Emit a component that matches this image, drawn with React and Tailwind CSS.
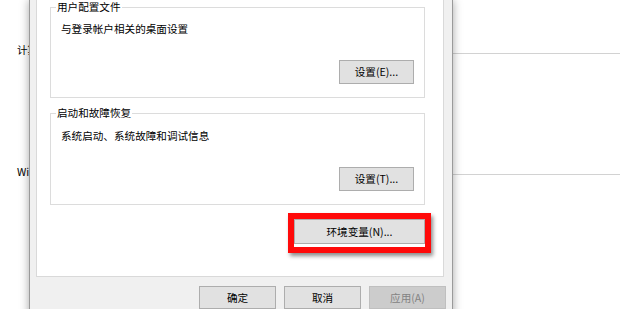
export default function App() {
  const font = { fontFamily: '"Noto Sans CJK SC", "Noto Sans", sans-serif' };
  return (
    <div
      className="w-[620px] h-[309px] flex overflow-hidden bg-white text-[10.6px] text-black"
      style={font}
    >
      {/* left background window */}
      <div className="w-[29px] shrink-0 overflow-hidden whitespace-nowrap pl-[17px] leading-[16px]">
        <div className="mt-[42px]">计算机名</div>
        <div className="mt-[106px]">Windows</div>
      </div>

      {/* dialog */}
      <div className="relative z-10 w-[424px] shrink-0 h-[340px] bg-[#f0f0f0] border-x border-[#9a9a9a] shadow-[0_0_9px_rgba(0,0,0,0.35)] px-[6px] flex flex-col">
        <div className="w-[408px] bg-white border-x border-b border-[#d9d9d9] pl-[13px] pt-[7px] pb-[23px] flex flex-col">
          {/* group 1 */}
          <div className="relative w-[375px] border border-[#dcdcdc] pt-[13px] pb-[13px] pl-[10px] pr-[10px] flex flex-col">
            <span className="absolute left-[5px] top-[-9px] px-[1px] bg-white leading-[16px]">用户配置文件</span>
            <div className="leading-[16px]">与登录帐户相关的桌面设置</div>
            <div className="mt-[23px] self-end w-[75px] h-[24px] bg-[#e1e1e1] border border-[#adadad] flex items-center justify-center">
              设置(E)...
            </div>
          </div>

          {/* group 2 */}
          <div className="relative mt-[15px] w-[375px] border border-[#dcdcdc] pt-[14px] pb-[13px] pl-[10px] pr-[10px] flex flex-col">
            <span className="absolute left-[5px] top-[-9px] px-[1px] bg-white leading-[16px]">启动和故障恢复</span>
            <div className="leading-[16px]">系统启动、系统故障和调试信息</div>
            <div className="mt-[23px] self-end w-[75px] h-[24px] bg-[#e1e1e1] border border-[#adadad] flex items-center justify-center">
              设置(T)...
            </div>
          </div>

          {/* env var button highlighted */}
          <div className="mt-[8px] ml-[238px] w-[143px] h-[40px] border-[6px] border-[#ff0a0a] shadow-[2px_3px_4px_rgba(0,0,0,0.45)] pb-[3px]">
            <div className="w-full h-full bg-[#e1e1e1] border border-[#adadad] flex items-center justify-center">
              环境变量(N)...
            </div>
          </div>
        </div>

        {/* bottom buttons */}
        <div className="mt-[9px] flex justify-end gap-[8px]">
          <div className="w-[77px] h-[23px] bg-[#e1e1e1] border border-[#adadad] flex items-center justify-center">确定</div>
          <div className="w-[77px] h-[23px] bg-[#e1e1e1] border border-[#adadad] flex items-center justify-center">取消</div>
          <div className="w-[77px] h-[23px] bg-[#cccccc] border border-[#bfbfbf] text-[#838383] flex items-center justify-center">应用(A)</div>
        </div>
      </div>

      {/* right background window */}
      <div className="flex-1 flex flex-col">
        <div className="h-[54px] border-b border-[#d2d2d2]" />
        <div className="h-[121px] border-b border-[#d2d2d2]" />
        <div className="flex-1" />
      </div>
    </div>
  );
}
